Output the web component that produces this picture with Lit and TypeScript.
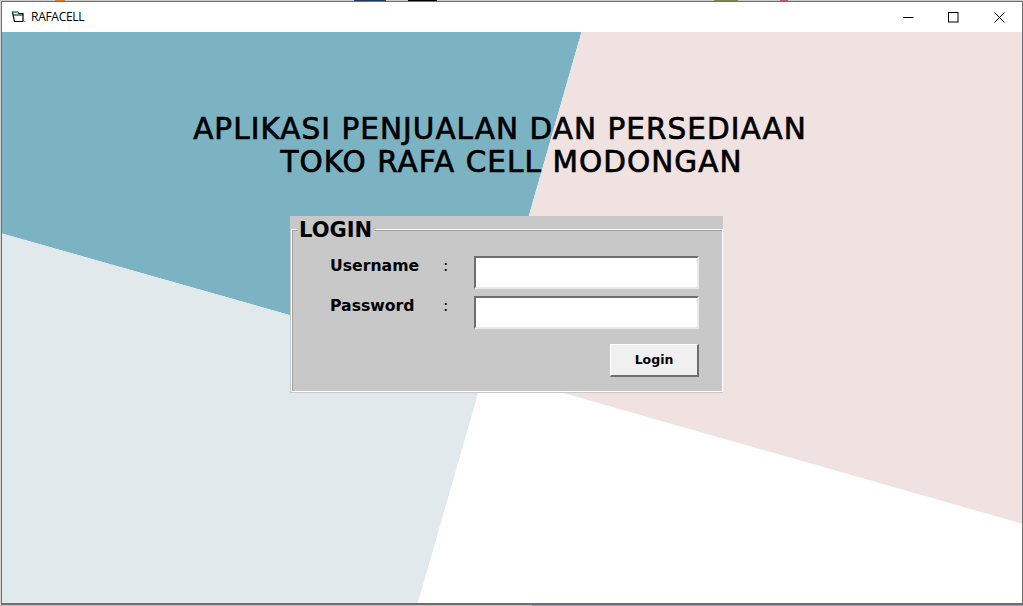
import { LitElement, html, css } from "lit";
import { customElement } from "lit/decorators.js";

@customElement("app-root")
export class AppRoot extends LitElement {
  static styles = css`
    :host { display: block; width: 1023px; height: 606px; overflow: hidden; background: #d4d4d4; font-family: "Liberation Sans", sans-serif; }
    .strip { height: 1px; background: linear-gradient(90deg, #ccc 0 55px, #d9793a 55px 65px, #ccc 65px 354px, #1d3a5c 354px 386px, #ccc 386px 408px, #000 408px 437px, #ccc 437px 714px, #7a8a50 714px 738px, #ccc 738px 780px, #c8507a 780px 788px, #ccc 788px); }
    .strip-bottom { height: 1px; background: linear-gradient(90deg, #c4c4c4 0 532px, #9aa3b5 532px); }
    .window { margin-left: 1px; width: 1022px; height: 604px; box-sizing: border-box; border: 1px solid #6f6f6f; border-bottom-width: 2px; background: #fff; display: flex; flex-direction: column; }
    .titlebar { height: 30px; flex: none; display: flex; align-items: center; background: #fff; }
    .app-icon { margin-left: 9px; width: 14px; height: 14px; flex: none; }
    .title { margin-left: 6px; font: 12px/16px "Open Sans", sans-serif; letter-spacing: -0.28px; color: #000; flex: 1; }
    .ctl { width: 45.5px; height: 30px; display: flex; align-items: center; justify-content: center; flex: none; }
    .ctl svg { width: 11px; height: 11px; display: block; }
    .client { position: relative; flex: 1; display: flex; flex-direction: column; align-items: flex-start; overflow: hidden; background: #fff; }
    .bg { position: absolute; inset: 0; width: 100%; height: 100%; }
    h1 { position: relative; margin: 81px 0 0 188px; width: 620px; text-align: center; font: 400 29.5px/33px "DejaVu Sans", sans-serif; letter-spacing: 1.04px; color: #000; -webkit-text-stroke: 0.7px #000; }
    .line2 { display: block; padding-left: 23px; }
    .panel { position: relative; box-sizing: border-box; margin: 37px 0 0 288px; width: 433px; height: 177px; padding-top: 13px; background: #c8c8c8; }
    .group { box-sizing: border-box; height: 163px; margin-left: 1px; border: 1px solid #fff; box-shadow: inset 1px 1px 0 #a0a0a0; padding: 26px 23px 0 38px; display: flex; flex-direction: column; }
    .legend { position: absolute; left: 7px; top: 1px; padding: 0 3px 0 2px; background: #c8c8c8; font: 700 21px/26px "DejaVu Sans", sans-serif; color: #000; }
    .row { display: grid; grid-template-columns: 113px 31px 1fr; align-items: start; height: 33px; margin-bottom: 7px; }
    .lbl { font: 700 15.7px/20px "DejaVu Sans", sans-serif; color: #000; }
    .colon { font: 400 16px/20px "DejaVu Sans", sans-serif; color: #000; }
    .inp { box-sizing: border-box; height: 33px; width: 225px; background: #fff; border-style: solid; border-width: 2px; border-color: #6e6e6e #eaeaea #eaeaea #6e6e6e; }
    .actions { display: flex; justify-content: flex-end; margin-top: 8px; }
    button { box-sizing: border-box; width: 89px; height: 33px; padding: 0; background: #f0f0f0; border-style: solid; border-width: 1px 2px 2px 1px; border-color: #fff #6e6e6e #6e6e6e #fff; font: 700 12.5px/1 "DejaVu Sans", sans-serif; color: #000; }
  `;

  render() {
    return html`
      <div class="strip"></div>
      <div class="window">
        <div class="titlebar">
          <svg class="app-icon" viewBox="0 0 14 14" fill="none">
            <path d="M1.5 2h5l1 1.5h4.5v8h-8.5z" stroke="#000" stroke-width="1.2"/>
            <path d="M1.5 2h5l1 1.5" stroke="#19c8e8" stroke-width="1.2"/>
            <path d="M2 5h10" stroke="#000"/>
            <path d="M12 11.5h2" stroke="#888"/>
          </svg>
          <span class="title">RAFACELL</span>
          <div class="ctl"><svg viewBox="0 0 11 11"><path d="M0 5.5h10.5" stroke="#000" fill="none"/></svg></div>
          <div class="ctl"><svg viewBox="0 0 11 11"><rect x=".5" y=".5" width="9.5" height="9.5" stroke="#000" fill="none"/></svg></div>
          <div class="ctl"><svg viewBox="0 0 11 11"><path d="M.5.5l10 10M10.5.5l-10 10" stroke="#000" fill="none"/></svg></div>
        </div>
        <div class="client">
          <svg class="bg">
            <polygon points="0,0 579.5,0 482.6,338.5 0,201.5" fill="#7bb3c3"/>
            <polygon points="579.5,0 1021,0 1021,492 482.6,338.5" fill="#f0e2e1"/>
            <polygon points="0,201.5 482.6,338.5 415.5,572 0,572" fill="#e1e9ec"/>
          </svg>
          <h1>APLIKASI PENJUALAN DAN PERSEDIAAN<span class="line2">TOKO RAFA CELL MODONGAN</span></h1>
          <div class="panel">
            <div class="legend">LOGIN</div>
            <div class="group">
              <div class="row"><span class="lbl">Username</span><span class="colon">:</span><div class="inp"></div></div>
              <div class="row"><span class="lbl">Password</span><span class="colon">:</span><div class="inp"></div></div>
              <div class="actions"><button>Login</button></div>
            </div>
          </div>
        </div>
      </div>
      <div class="strip-bottom"></div>
    `;
  }
}
